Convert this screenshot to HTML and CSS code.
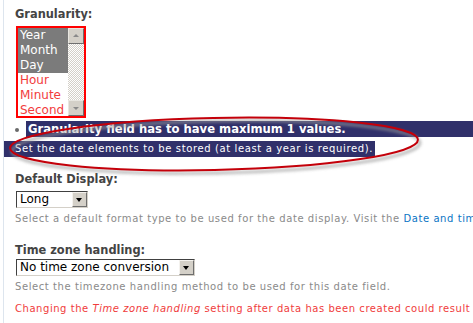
FILE: index.html
```
<!DOCTYPE html>
<html lang="en">
<head>
  <meta charset="UTF-8">
  <title>Date field settings</title>
  <link rel="stylesheet" href="styles.css">
</head>
<body>

<div class="page">
  <!-- granularity -->
  <div class="field">
    <div class="label">Granularity:</div>
    <div class="listbox">
      <ul class="options">
        <li class="selected">Year</li>
        <li class="selected">Month</li>
        <li class="selected">Day</li>
        <li>Hour</li>
        <li>Minute</li>
        <li>Second</li>
      </ul>
      <div class="scrollbar">
        <span class="sbtn up"></span>
        <span class="sbtn down"></span>
      </div>
    </div>
  </div>

  <!-- error message, selected text -->
  <div class="msg">
    <div class="msg-title"><span class="dot"></span><span class="hl">Granularity field has to have maximum 1 values.</span></div>
    <div class="msg-desc"><span>Set the date elements to be stored (at least a year is required).</span></div>
  </div>

  <div class="field">
    <div class="label">Default Display:</div>
    <div class="select small"><span class="val">Long</span><span class="arrow"></span></div>
    <div class="desc">Select a default format type to be used for the date display. Visit the <a href="#">Date and time settings</a> page.</div>
  </div>

  <div class="field">
    <div class="label">Time zone handling:</div>
    <div class="select wide"><span class="val">No time zone conversion</span><span class="arrow"></span></div>
    <div class="desc">Select the timezone handling method to be used for this date field.</div>
    <div class="warn">Changing the <em>Time zone handling</em> setting after data has been created could result in data loss.</div>
  </div>
</div>

<!-- annotation drawn over the message -->
<svg class="mark" width="473" height="323" viewBox="0 0 473 323">
  <defs>
    <filter id="soft" x="-10%" y="-50%" width="120%" height="200%">
      <feGaussianBlur stdDeviation="1.6"/>
    </filter>
  </defs>
  <ellipse cx="216" cy="147" rx="204" ry="26" transform="rotate(-1.2 216 147)"
           fill="none" stroke="#9a9a9a" stroke-width="3" opacity="0.7" filter="url(#soft)"/>
  <ellipse cx="214" cy="144" rx="204" ry="26" transform="rotate(-1.2 214 144)"
           fill="none" stroke="#c4000a" stroke-width="2"/>
</svg>

</body>
</html>
```

FILE: styles.css
```
* { margin: 0; padding: 0; }
body { font-family: "DejaVu Sans", Verdana, sans-serif; background: #fff;
  width: 473px; height: 323px; overflow: hidden; position: relative; }
.page { margin-left: 3px; border-left: 1px solid #dde5ee;
  padding: 7px 0 0 11px; height: 316px; overflow: hidden; }
.label { font-size: 11.4px; font-weight: bold; color: #444; line-height: 15px; }

/* listbox */
.listbox { display: flex; width: 66px; height: 88px; border: 2px solid #f00;
  margin: 4px 0 0 1px; overflow: hidden; }
.options { list-style: none; width: 50px; }
.options li { font-size: 12px; line-height: 15px; height: 15px; color: #f23c3c;
  padding-left: 2px; }
.options li.selected { background: #7b7b7b; color: #fff; }
.scrollbar { width: 16px; display: flex; flex-direction: column;
  justify-content: space-between;
  background: repeating-conic-gradient(#d4d0c8 0 25%, #fff 0 50%) 0 0 / 2px 2px; }
.sbtn { display: block; width: 16px; height: 16px; background: #d4d0c8;
  box-sizing: border-box; border: 1px solid; border-color: #e8e6e0 #6e6e6e #6e6e6e #e8e6e0;
  position: relative; }
.sbtn::after { content: ""; position: absolute; left: 4px; width: 0; height: 0;
  border-left: 3px solid transparent; border-right: 3px solid transparent; }
.sbtn.up::after { top: 5px; border-bottom: 3px solid #8a8a8a; }
.sbtn.down::after { top: 6px; border-top: 3px solid #8a8a8a; }

/* message */
.msg { margin-top: 3px; }
.msg-title { display: flex; align-items: center; height: 16px; }
.dot { width: 4px; height: 4px; border-radius: 50%; background: #6a6a6a;
  margin: 2px 7px 0 0; }
.hl { flex: 1; background: #30306a; color: #fff; font-size: 11.6px; font-weight: bold;
  line-height: 16px; padding-left: 2px; margin-right: -1px; white-space: nowrap; }
.msg-desc { margin-left: -15px; height: 16px; }
.msg-desc span { display: inline-block; background: #30306a; color: #fff;
  font-size: 10px; line-height: 16px; padding: 0 2px 0 15px; letter-spacing: 0.62px; }

/* selects */
.msg + .field { margin-top: 19px; }
.select { display: flex; align-items: center; margin: 4px 0 0 1px; height: 17px;
  box-sizing: border-box; border: 1px solid; border-color: #404040 #d4d0c8 #d4d0c8 #404040;
  background: #fff; }
.select .val { flex: 1; font-size: 12px; color: #000; padding-left: 3px; line-height: 15px; }
.select .arrow { width: 15px; height: 15px; background: #d4d0c8; box-sizing: border-box;
  border: 1px solid; border-color: #f4f2ee #6e6e6e #6e6e6e #f4f2ee; position: relative; }
.select .arrow::after { content: ""; position: absolute; left: 3px; top: 5px;
  border-left: 3.5px solid transparent; border-right: 3.5px solid transparent;
  border-top: 4px solid #000; }
.select.small { width: 72px; }
.select.wide { width: 179px; margin-top: 1px; }
.desc { font-size: 10px; color: #8a8a8a; line-height: 14px; margin-top: 4px;
  white-space: nowrap; letter-spacing: 0.58px; }
.desc a { color: #0a74c4; text-decoration: none; }
.field + .field { margin-top: 17px; }
.warn { font-size: 10px; color: #f03c3c; line-height: 14px; margin-top: 8px;
  white-space: nowrap; letter-spacing: 0.55px; }

.mark { position: absolute; left: 0; top: 0; pointer-events: none; }
```
